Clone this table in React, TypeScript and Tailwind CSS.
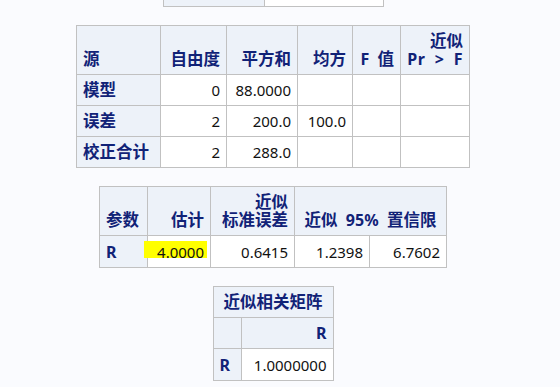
const th = "border border-[#c1c1c1] bg-[#edf2f9] text-[#112277] font-bold px-[6px] leading-[18px] text-[16px]";
const td = "border border-[#c1c1c1] bg-white text-[#111] px-[6px] text-right leading-[18px]";

const Zh = ({ children }: { children: React.ReactNode }) => (
  <span className="inline-block text-[16.5px] leading-[18px] h-[18px]">{children}</span>
);

const AnovaTable = () => {
  const rows = [
    { src: "模型", df: "0", ss: "88.0000", ms: "" },
    { src: "误差", df: "2", ss: "200.0", ms: "100.0" },
    { src: "校正合计", df: "2", ss: "288.0", ms: "" },
  ];
  return (
    <table className="border-collapse table-fixed w-[393px]">
      <colgroup>
        <col className="w-[84px]" />
        <col className="w-[66px]" />
        <col className="w-[71px]" />
        <col className="w-[55px]" />
        <col className="w-[48px]" />
        <col className="w-[69px]" />
      </colgroup>
      <thead>
        <tr className="h-[49px]">
          <th className={`${th} text-left align-bottom pb-[6px]`}><Zh>源</Zh></th>
          <th className={`${th} text-right align-bottom pb-[6px]`}><Zh>自由度</Zh></th>
          <th className={`${th} text-right align-bottom pb-[6px]`}><Zh>平方和</Zh></th>
          <th className={`${th} text-right align-bottom pb-[6px]`}><Zh>均方</Zh></th>
          <th className={`${th} text-right align-bottom pb-[6px] whitespace-nowrap`}>F&nbsp; <Zh>值</Zh></th>
          <th className={`${th} text-right align-bottom pb-[6px] whitespace-nowrap`}>
            <Zh>近似</Zh>
            <br />
            <span className="tracking-[0.5px]">Pr&nbsp; &gt;&nbsp; F</span>
          </th>
        </tr>
      </thead>
      <tbody>
        {rows.map((r) => (
          <tr key={r.src} className="h-[31px]">
            <th className={`${th} text-left`}><Zh>{r.src}</Zh></th>
            <td className={td}>{r.df}</td>
            <td className={td}>{r.ss}</td>
            <td className={td}>{r.ms}</td>
            <td className={td}></td>
            <td className={td}></td>
          </tr>
        ))}
      </tbody>
    </table>
  );
};

const ParamTable = () => (
  <table className="border-collapse table-fixed w-[347px]">
    <colgroup>
      <col className="w-[48px]" />
      <col className="w-[63px]" />
      <col className="w-[84px]" />
      <col className="w-[75px]" />
      <col className="w-[77px]" />
    </colgroup>
    <thead>
      <tr className="h-[49px]">
        <th className={`${th} text-left align-bottom pb-[6px]`}><Zh>参数</Zh></th>
        <th className={`${th} text-right align-bottom pb-[6px]`}><Zh>估计</Zh></th>
        <th className={`${th} text-right align-bottom pb-[6px] whitespace-nowrap`}>
          <Zh>近似</Zh>
          <br />
          <Zh>标准误差</Zh>
        </th>
        <th colSpan={2} className={`${th} text-center align-bottom pb-[6px] whitespace-nowrap`}>
          <Zh>近似</Zh>&nbsp;&nbsp;95%&nbsp;&nbsp;<Zh>置信限</Zh>
        </th>
      </tr>
    </thead>
    <tbody>
      <tr className="h-[32px]">
        <th className={`${th} text-left`}>R</th>
        <td className={`${td} relative`}>
          <span className="absolute left-[-4px] top-[5px] w-[63px] h-[17px] bg-[#ffff00]" />
          <span className="relative">4.0000</span>
        </td>
        <td className={td}>0.6415</td>
        <td className={td}>1.2398</td>
        <td className={td}>6.7602</td>
      </tr>
    </tbody>
  </table>
);

const CorrTable = () => (
  <table className="border-collapse table-fixed w-[120px]">
    <colgroup>
      <col className="w-[28px]" />
      <col className="w-[92px]" />
    </colgroup>
    <thead>
      <tr className="h-[31px]">
        <th colSpan={2} className={`${th} text-center whitespace-nowrap`}><Zh>近似相关矩阵</Zh></th>
      </tr>
      <tr className="h-[31px]">
        <th className={th}></th>
        <th className={`${th} text-right`}>R</th>
      </tr>
    </thead>
    <tbody>
      <tr className="h-[32px]">
        <th className={`${th} text-left`}>R</th>
        <td className={td}>1.0000000</td>
      </tr>
    </tbody>
  </table>
);

export default function App() {
  return (
    <div className="min-h-[387px] w-full bg-[#fafbfe] font-['Noto_Sans','Noto_Sans_CJK_SC',sans-serif] text-[15px]">
      <div className="w-[546px] flex flex-col items-center gap-[18px]">
        <div className="flex h-[7px] w-[221px]">
          <div className="w-[102px] bg-[#edf2f9] border-x border-b border-[#c1c1c1]" />
          <div className="flex-1 bg-white border-r border-b border-[#c1c1c1]" />
        </div>
        <AnovaTable />
        <ParamTable />
        <CorrTable />
      </div>
    </div>
  );
}
